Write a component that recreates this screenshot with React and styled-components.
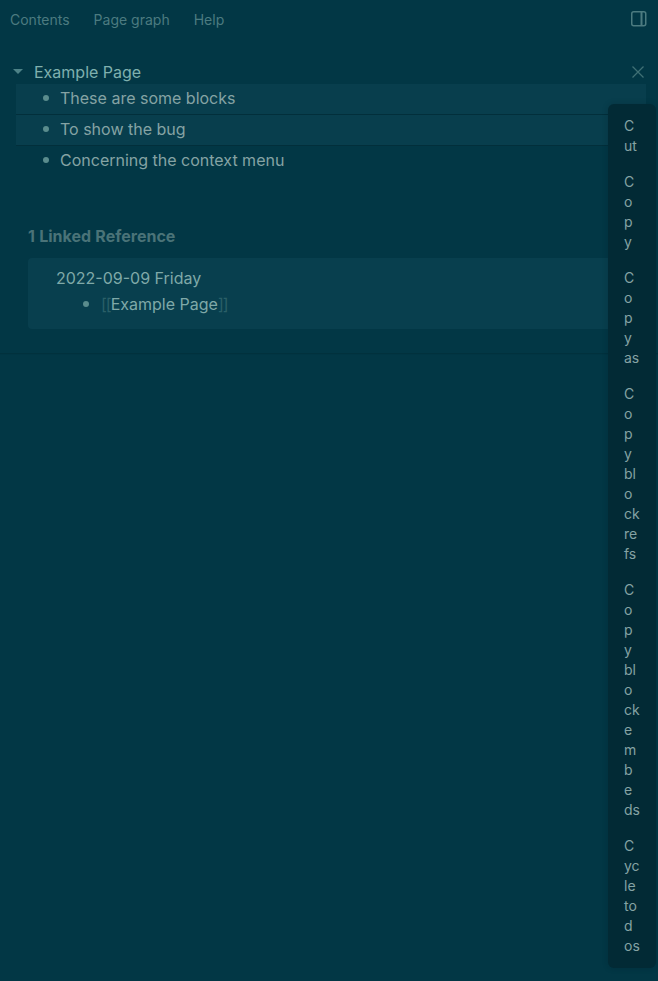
import styled, { createGlobalStyle } from "styled-components"

const Global = createGlobalStyle`
  html, body { margin: 0; padding: 0; height: 100%; }
  body {
    background: #023745;
    font-family: Inter, "Noto Sans", sans-serif;
    overflow: hidden;
  }
`

const Page = styled.div`
  position: relative;
  width: 658px;
  height: 981px;
  overflow: hidden;
  background: #023745;
  color: #8fb9b8;
`

const TopBar = styled.div`
  display: flex;
  align-items: center;
  justify-content: space-between;
  height: 38px;
  padding: 0 11px 1px 10px;
`

const Tabs = styled.nav`
  display: flex;
  gap: 24px;
  font-size: 14px;
  color: #4c7b80;
`

const Section = styled.section`
  height: 314px;
  box-sizing: border-box;
  padding-top: 20px;
  box-shadow: 0 1px 1px rgba(0, 30, 40, 0.25);
`

const TitleRow = styled.div`
  display: flex;
  align-items: center;
  height: 26px;
  padding: 0 13px;
  font-size: 16px;
  color: #7fb0ae;
`

const Caret = styled.span`
  width: 0;
  height: 0;
  margin-right: 11px;
  border-left: 5px solid transparent;
  border-right: 5px solid transparent;
  border-top: 5px solid #4d8287;
  transform: translateY(-1px);
`

const TitleText = styled.span`
  flex: 1;
`

const Blocks = styled.div`
  margin: -1px 12px 0 16px;
`

const Block = styled.div`
  display: flex;
  align-items: center;
  height: 28px;
  padding: 0 0 2px 27px;
  font-size: 16px;
  color: #85a3a4;
  background: ${(p) => (p.$selected ? "#083e4d" : "transparent")};
  border-bottom: 1px solid ${(p) => (p.$selected ? "#022f3b" : "transparent")};
`

const Bullet = styled.span`
  flex: none;
  width: 6px;
  height: 6px;
  margin-right: ${(p) => p.$gap}px;
  border-radius: 50%;
  background: #5a8c8d;
`

const RefHeading = styled.h3`
  margin: 46px 0 0 28px;
  font-size: 16px;
  line-height: 26px;
  font-weight: 700;
  word-spacing: 0.5px;
  color: #4a7378;
`

const RefCard = styled.div`
  margin: 9px 12px 0 28px;
  height: 71px;
  padding: 7px 0 0 28px;
  box-sizing: border-box;
  border-radius: 4px;
  background: #083f4e;
  font-size: 16px;
  line-height: 26px;
  color: #7fa9a8;
`

const RefBlock = styled.div`
  display: flex;
  align-items: center;
  padding-left: 27px;
`

const Brackets = styled.span`
  color: #2a5f68;
  letter-spacing: -1px;
`

const Menu = styled.div`
  position: absolute;
  top: 104px;
  left: 608px;
  width: 48px;
  box-sizing: border-box;
  padding: 4px 0;
  border-radius: 6px;
  background: #022a35;
  box-shadow: 0 0 6px rgba(0, 20, 28, 0.2);
  font-size: 14px;
  line-height: 20px;
  color: #85a3a4;
`

const MenuItem = styled.div`
  padding: 8px 16px;
  word-break: break-all;
`

const menuItems = ["Cut", "Copy", "Copy as", "Copy block refs", "Copy block embeds", "Cycle todos"]

const App = () => {
  return (
    <Page>
      <Global />
      <TopBar>
        <Tabs>
          <span>Contents</span>
          <span>Page graph</span>
          <span>Help</span>
        </Tabs>
        <svg width="16" height="16" viewBox="0 0 16 16" fill="none" stroke="#4c7b80" strokeWidth="1.5">
          <rect x="0.75" y="0.75" width="14" height="14" rx="2" />
          <path d="M10.5 1v13.5" strokeWidth="2" />
        </svg>
      </TopBar>
      <Section>
        <TitleRow>
          <Caret />
          <TitleText>Example Page</TitleText>
          <svg width="14" height="14" viewBox="0 0 14 14" fill="none" stroke="#3f7075" strokeWidth="1.3">
            <path d="M1.5 1.5l11 11M12.5 1.5l-11 11" />
          </svg>
        </TitleRow>
        <Blocks>
          <Block $selected><Bullet $gap={11} />These are some blocks</Block>
          <Block $selected><Bullet $gap={11} />To show the bug</Block>
          <Block><Bullet $gap={11} />Concerning the context menu</Block>
        </Blocks>
        <RefHeading>1 Linked Reference</RefHeading>
        <RefCard>
          <div>2022-09-09 Friday</div>
          <RefBlock>
            <Bullet $gap={12} />
            <span><Brackets>[[</Brackets>Example Page<Brackets>]]</Brackets></span>
          </RefBlock>
        </RefCard>
      </Section>
      <Menu>
        {menuItems.map((item) => (
          <MenuItem key={item}>{item}</MenuItem>
        ))}
      </Menu>
    </Page>
  )
}

export default App
